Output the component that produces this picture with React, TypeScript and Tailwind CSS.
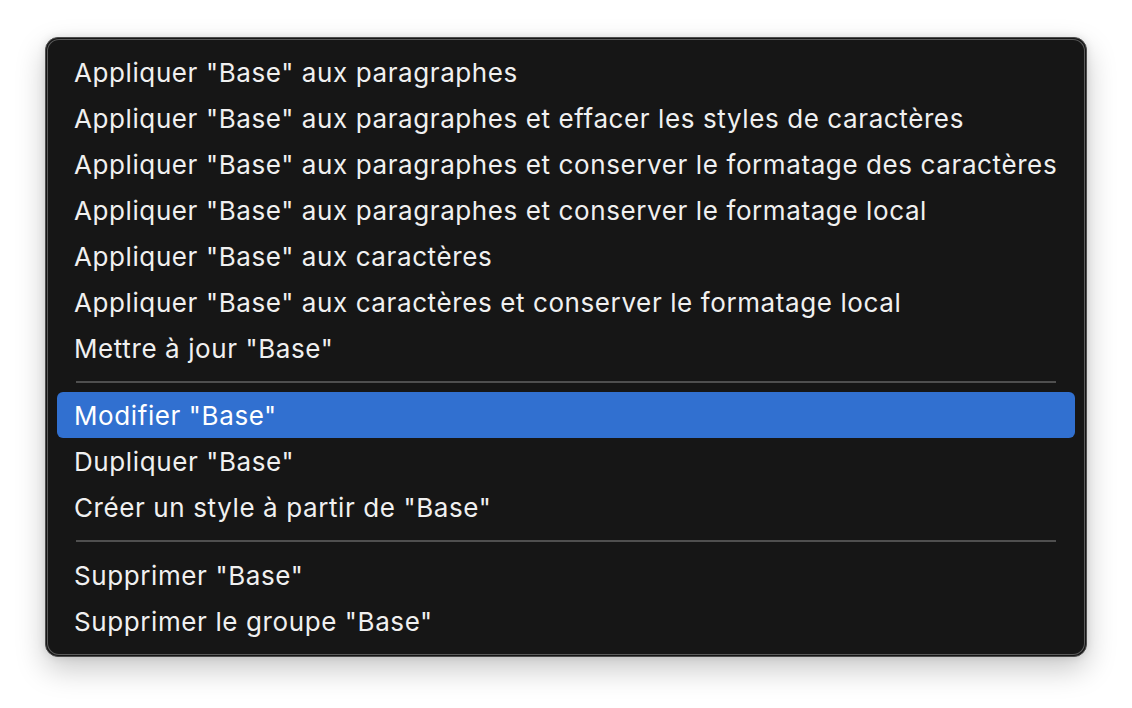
const groups: string[][] = [
  [
    'Appliquer "Base" aux paragraphes',
    'Appliquer "Base" aux paragraphes et effacer les styles de caractères',
    'Appliquer "Base" aux paragraphes et conserver le formatage des caractères',
    'Appliquer "Base" aux paragraphes et conserver le formatage local',
    'Appliquer "Base" aux caractères',
    'Appliquer "Base" aux caractères et conserver le formatage local',
    'Mettre à jour "Base"',
  ],
  ['Modifier "Base"', 'Dupliquer "Base"', 'Créer un style à partir de "Base"'],
  ['Supprimer "Base"', 'Supprimer le groupe "Base"'],
];

const active = 'Modifier "Base"';

function MenuItem({ label }: { label: string }) {
  const isActive = label === active;
  return (
    <div
      className={
        "flex h-[46px] items-center whitespace-nowrap rounded-[6px] px-[17px] " +
        (isActive ? "bg-[#3170d0] text-white" : "text-[#f0f0f0]")
      }
    >
      {label}
    </div>
  );
}

export default function App() {
  return (
    <div className="min-h-screen bg-white pt-[37px] pl-[45px]">
      <div
        className="w-[1042px] rounded-[13px] border border-[#4d4d4d] bg-[#161616] p-px shadow-[0_12px_30px_rgba(0,0,0,0.22),0_0_8px_rgba(0,0,0,0.1)]"
        style={{ fontFamily: '"Inter", "Noto Sans", sans-serif' }}
      >
        <div className="rounded-[12px] ring-1 ring-inset ring-[#8a8a8a]/60 px-[10px] pt-[10px] pb-[11px] text-[26px] tracking-[0.6px]">
          {groups.map((items, gi) => (
            <div key={gi}>
              {gi > 0 && (
                <div className={"flex items-center px-[19px] " + (gi === 1 ? "h-[21px]" : "h-[22px]")}>
                  <div className="h-[2px] w-full bg-[#4f4f4f]" />
                </div>
              )}
              {items.map((label) => (
                <MenuItem key={label} label={label} />
              ))}
            </div>
          ))}
        </div>
      </div>
    </div>
  );
}
